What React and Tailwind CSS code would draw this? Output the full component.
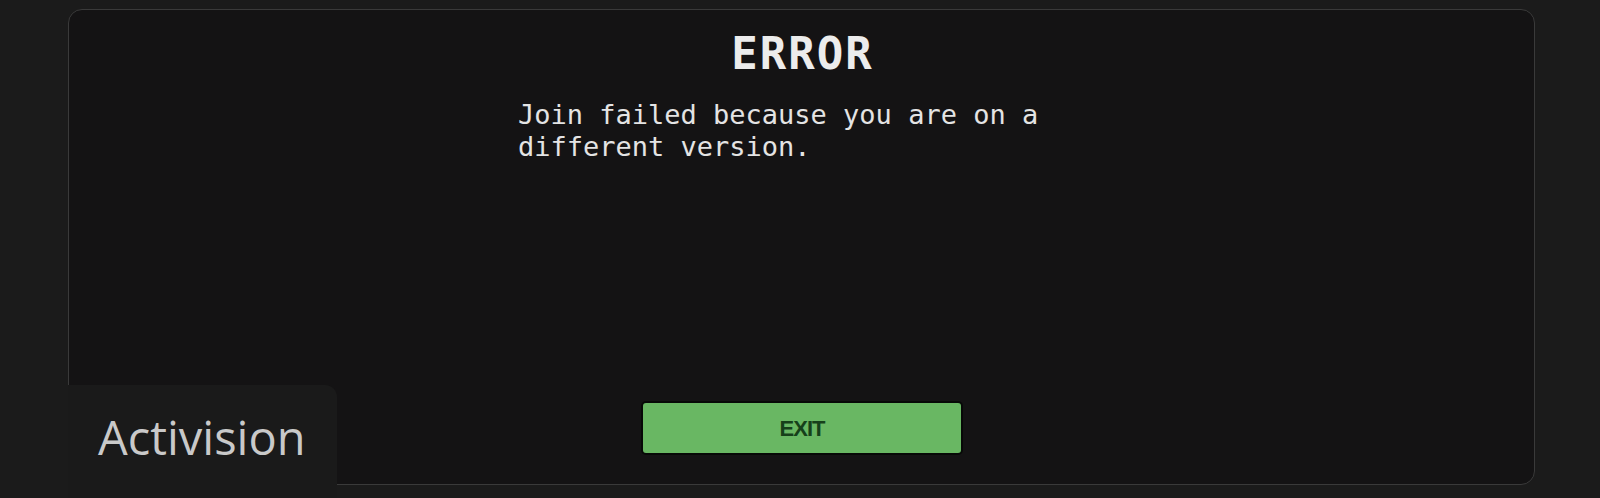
export default function App() {
  return (
    <div className="relative h-[498px] w-full overflow-hidden bg-[#1b1b1b] pl-[68px] pr-[65px] pt-[9px]">
      <ErrorDialog />
      <SourceTag label="Activision" />
    </div>
  );
}

function ErrorDialog() {
  return (
    <section className="flex h-[476px] flex-col rounded-[14px] border border-[#3a3a3a] bg-[#141314]">
      <h1 className="mt-[20px] pl-[2px] text-center font-['DejaVu_Sans_Mono',monospace] text-[44px] font-bold leading-[48px] tracking-[2px] text-[#ececec]">
        ERROR
      </h1>
      <p className="ml-[449px] mt-[21px] w-[560px] font-['DejaVu_Sans_Mono',monospace] text-[27px] leading-[32px] text-[#e4e4e4]">
        Join failed because you are on a different version.
      </p>
      <div className="mt-auto mb-[31px] flex justify-center pl-[1px]">
        <button
          type="button"
          className="h-[50px] w-[318px] rounded-[3px] bg-[#69b763] font-['Liberation_Sans',Arial,sans-serif] text-[22px] font-bold tracking-[-1px] text-[#16401a] shadow-[0_0_0_2px_#070907]"
        >
          EXIT
        </button>
      </div>
    </section>
  );
}

function SourceTag({ label }) {
  return (
    <div className="absolute bottom-0 left-[68px] flex h-[113px] w-[269px] items-center rounded-tr-[12px] bg-[#1a1a1a] pb-[8px] pl-[30px]">
      <span className="font-['Open_Sans',sans-serif] text-[47px] text-[#c9c9c9]">{label}</span>
    </div>
  );
}
